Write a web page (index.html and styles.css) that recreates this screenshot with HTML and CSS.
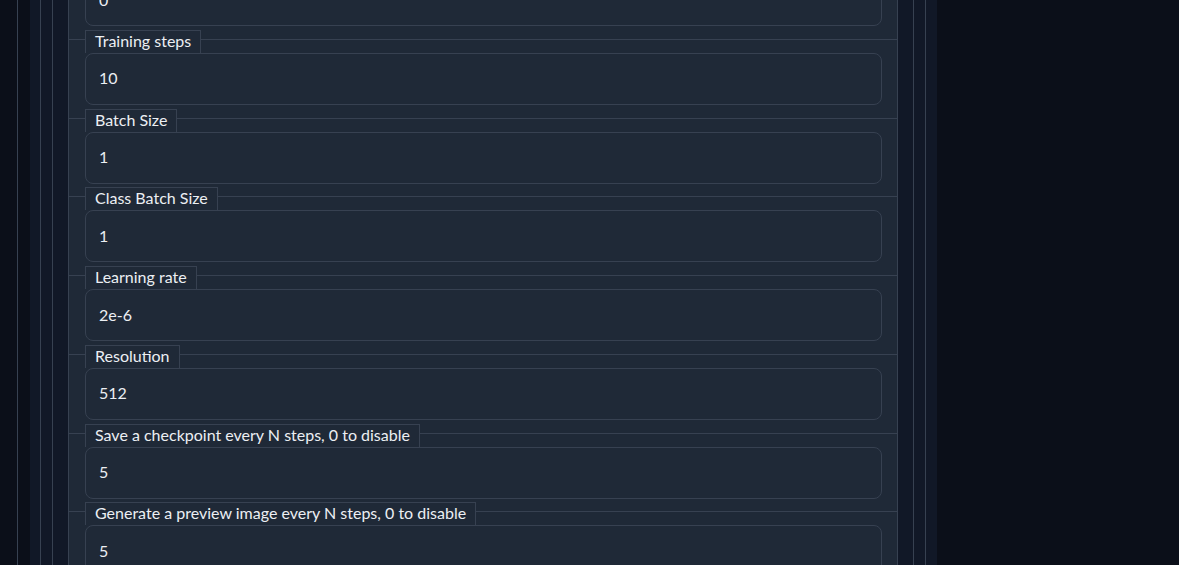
FILE: index.html
```html
<!DOCTYPE html>
<html lang="en">
<head>
<meta charset="utf-8">
<title>Training settings</title>
<link rel="stylesheet" href="styles.css">
</head>
<body>
<div class="outer">
  <div class="shell">
    <div class="frame1">
      <div class="frame2">
        <div class="panel">
          <div class="stack">
            <div class="row">
              <span class="label">Max steps</span>
              <input class="field" type="text" value="0">
            </div>
            <div class="row">
              <span class="label">Training steps</span>
              <input class="field" type="text" value="10">
            </div>
            <div class="row">
              <span class="label">Batch Size</span>
              <input class="field" type="text" value="1">
            </div>
            <div class="row">
              <span class="label">Class Batch Size</span>
              <input class="field" type="text" value="1">
            </div>
            <div class="row">
              <span class="label">Learning rate</span>
              <input class="field" type="text" value="2e-6">
            </div>
            <div class="row">
              <span class="label">Resolution</span>
              <input class="field" type="text" value="512">
            </div>
            <div class="row">
              <span class="label">Save a checkpoint every N steps, 0 to disable</span>
              <input class="field" type="text" value="5">
            </div>
            <div class="row">
              <span class="label">Generate a preview image every N steps, 0 to disable</span>
              <input class="field" type="text" value="5">
            </div>
          </div>
        </div>
      </div>
    </div>
  </div>
</div>
</body>
</html>
```

FILE: styles.css
```css
html, body {
  margin: 0;
  padding: 0;
  background: #0b0f19;
  height: 565px;
  overflow: hidden;
  font-family: "Source Sans Pro", Lato, "Noto Sans", sans-serif;
  color: #e5e7eb;
}

.outer {
  margin-left: 17px;
  border-left: 1px solid #374151;
  padding-left: 12px;
  height: 565px;
}

.shell {
  width: 907px;
  height: 565px;
  background: #111827;
  padding-left: 10px;
  box-sizing: border-box;
}

.frame1 {
  width: 886px;
  height: 565px;
  box-sizing: border-box;
  border-left: 1px solid #374151;
  border-right: 1px solid #374151;
  padding: 0 11px;
}

.frame2 {
  height: 565px;
  box-sizing: border-box;
  border-left: 1px solid #374151;
  border-right: 1px solid #374151;
  padding: 0 15px;
}

.panel {
  height: 565px;
  box-sizing: border-box;
  border-left: 1px solid #374151;
  border-right: 1px solid #374151;
  background: #1f2937;
  overflow: hidden;
}

.stack {
  margin-top: -40px;
  display: flex;
  flex-direction: column;
}

.row {
  border-top: 1px solid #374151;
  padding: 0 15px 12.75px 16px;
  display: flex;
  flex-direction: column;
  align-items: flex-start;
}

.label {
  margin-top: -10px;
  display: block;
  background: #1f2937;
  border: 1px solid #374151;
  border-bottom: none;
  padding: 0 9px 2px;
  height: 23px;
  box-sizing: border-box;
  font-size: 16px;
  line-height: 20px;
  color: #eceff3;
  white-space: nowrap;
}

.field {
  display: block;
  width: 100%;
  height: 52px;
  box-sizing: border-box;
  margin: 0;
  border: 1px solid #374151;
  border-radius: 8px;
  background: #1f2937;
  color: #eceff3;
  font-family: inherit;
  font-size: 16px;
  padding: 0 13px 2px;
  outline: none;
}
```
